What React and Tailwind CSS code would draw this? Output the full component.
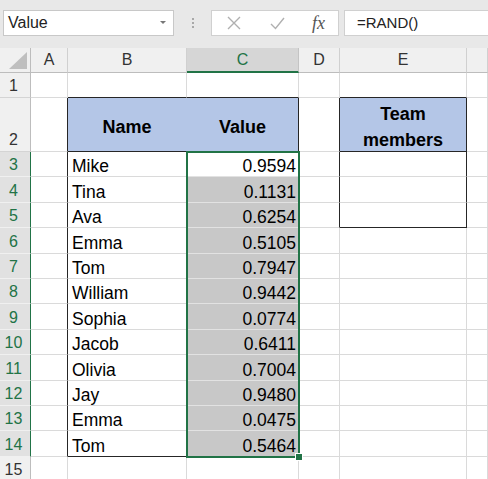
import React from 'react';

const people = [
  ['Mike', '0.9594'],
  ['Tina', '0.1131'],
  ['Ava', '0.6254'],
  ['Emma', '0.5105'],
  ['Tom', '0.7947'],
  ['William', '0.9442'],
  ['Sophia', '0.0774'],
  ['Jacob', '0.6411'],
  ['Olivia', '0.7004'],
  ['Jay', '0.9480'],
  ['Emma', '0.0475'],
  ['Tom', '0.5464'],
];

// one worksheet cell: right + bottom border, colours passed in
const Cell = ({ r = 'border-r-[#dadada]', b = 'border-b-[#dadada]', className = '', children }) => (
  <div className={`flex min-w-0 overflow-hidden border-r border-b ${r} ${b} ${className}`}>{children}</div>
);

const ColHead = ({ children, active }) =>
  active ? (
    <Cell r="border-r-[#c4c4c4]" b="border-b-[#217346]" className="border-b-2 bg-[#d6d6d6] items-center justify-center text-[16px] text-[#217346]">
      {children}
    </Cell>
  ) : (
    <Cell r="border-r-[#d0d0d0]" b="border-b-[#bdbdbd]" className="bg-[#f0f0f0] items-center justify-center text-[16px] text-[#333]">
      {children}
    </Cell>
  );

const RowHead = ({ children, active }) =>
  active ? (
    <Cell r="border-r-[#217346]" b="border-b-[#f0f0f0]" className="bg-[#e1e1e1] items-end justify-center pr-[3px] pb-[2px] text-[16px] leading-[18px] text-[#217346]">
      {children}
    </Cell>
  ) : (
    <Cell r="border-r-[#bdbdbd]" b="border-b-[#d4d4d4]" className="bg-[#f0f0f0] items-end justify-center pr-[3px] pb-[2px] text-[16px] leading-[18px] text-[#333]">
      {children}
    </Cell>
  );

const Toolbar = () => (
  <div className="h-[48px] bg-[#e8e8e8] flex items-start pt-[10px] pl-[3px] text-[15px] text-[#222]">
    <div className="w-[171px] h-[26px] bg-white border border-[#c8c8c8] flex items-center pl-[4px] pr-[7px]">
      <span className="grow text-[16px]">Value</span>
      <svg width="6" height="4" viewBox="0 0 6 4"><path d="M0 0h6L3 3z" fill="#777" /></svg>
    </div>
    <div className="w-[37px] h-[26px] flex flex-col items-center justify-center gap-[2px]">
      <span className="w-[2px] h-[2px] bg-[#a8a8a8]" />
      <span className="w-[2px] h-[2px] bg-[#a8a8a8]" />
      <span className="w-[2px] h-[2px] bg-[#a8a8a8]" />
    </div>
    <div className="w-[128px] h-[26px] bg-white border border-[#d0d0d0] flex items-center">
      <span className="w-[43px] flex justify-center">
        <svg width="14" height="14" viewBox="0 0 14 14"><path d="M1 1l12 12M13 1L1 13" stroke="#b0b0b0" strokeWidth="1.4" fill="none" /></svg>
      </span>
      <span className="w-[44px] flex justify-center">
        <svg width="15" height="13" viewBox="0 0 15 13"><path d="M1 7l4.5 4.5L14 1" stroke="#b0b0b0" strokeWidth="1.4" fill="none" /></svg>
      </span>
      <span className="w-[39px] flex justify-center font-['Liberation_Serif',serif] italic text-[18px] text-[#555]">fx</span>
    </div>
    <div className="ml-[5px] grow h-[26px] bg-white border-l border-y border-[#d0d0d0] flex items-center pl-[12px]">
      =RAND()
    </div>
  </div>
);

export default function App() {
  return (
    <div className="w-[488px] h-[479px] overflow-hidden bg-white font-['Liberation_Sans',Arial,sans-serif]">
      <Toolbar />
      <div className="relative grid grid-cols-[31px_37px_119px_112px_41px_127px_1fr] grid-rows-[25px_25px_54px_repeat(12,25.42px)_25px] text-[17.5px] leading-[20px] text-black">
        {/* column headers */}
        <Cell r="border-r-[#bdbdbd]" b="border-b-[#bdbdbd]" className="bg-[#f0f0f0] items-end justify-end pr-[3px] pb-[3px]">
          <svg width="18" height="17" viewBox="0 0 18 17"><path d="M18 0v17H0z" fill="#bfbfbf" /></svg>
        </Cell>
        <ColHead>A</ColHead>
        <ColHead>B</ColHead>
        <ColHead active>C</ColHead>
        <ColHead>D</ColHead>
        <ColHead>E</ColHead>
        <ColHead> </ColHead>

        {/* row 1 */}
        <RowHead>1</RowHead>
        <Cell />
        <Cell b="border-b-[#262626]" />
        <Cell b="border-b-[#262626]" />
        <Cell />
        <Cell b="border-b-[#262626]" />
        <Cell />

        {/* row 2: table headers */}
        <RowHead>2</RowHead>
        <Cell r="border-r-[#262626]" />
        <Cell r="border-r-[#b4c6e7]" b="border-b-[#262626]" className="bg-[#b4c6e7] items-center justify-center pt-[5px] font-bold text-[18px]">
          Name
        </Cell>
        <Cell r="border-r-[#262626]" b="border-b-[#262626]" className="bg-[#b4c6e7] items-center justify-center pt-[5px] font-bold text-[18px]">
          Value
        </Cell>
        <Cell r="border-r-[#262626]" />
        <Cell r="border-r-[#262626]" b="border-b-[#262626]" className="bg-[#b4c6e7] flex-col items-center justify-center pt-[5px] font-bold text-[18px] leading-[26px]">
          <span>Team</span>
          <span>members</span>
        </Cell>
        <Cell />

        {/* rows 3-14 */}
        {people.map(([name, value], i) => {
          const last = i === people.length - 1;
          const team = i < 3;
          return (
            <React.Fragment key={i}>
              <RowHead active>{i + 3}</RowHead>
              <Cell r="border-r-[#262626]" />
              <Cell r="border-r-[#262626]" b={last ? 'border-b-[#262626]' : 'border-b-[#dadada]'} className="items-end pl-[4px]">
                {name}
              </Cell>
              <Cell
                r="border-r-[#262626]"
                b={last ? 'border-b-[#262626]' : 'border-b-[#e2e2e2]'}
                className={`items-end justify-end pr-[2px] ${i === 0 ? 'bg-white' : 'bg-[#c8c8c8]'}`}
              >
                {value}
              </Cell>
              <Cell r={team ? 'border-r-[#262626]' : 'border-r-[#dadada]'} />
              <Cell r={team ? 'border-r-[#262626]' : 'border-r-[#dadada]'} b={i === 2 ? 'border-b-[#262626]' : 'border-b-[#dadada]'} />
              <Cell />
            </React.Fragment>
          );
        })}

        {/* row 15 */}
        <RowHead>15</RowHead>
        <Cell />
        <Cell />
        <Cell />
        <Cell />
        <Cell />
        <Cell />

        {/* selection outline + fill handle */}
        <div className="absolute left-[186px] top-[103px] w-[114px] h-[307px] border-2 border-[#217346] pointer-events-none" />
        <div className="absolute left-[296px] top-[406px] w-[6px] h-[6px] bg-[#217346] outline outline-1 outline-white" />
      </div>
    </div>
  );
}
